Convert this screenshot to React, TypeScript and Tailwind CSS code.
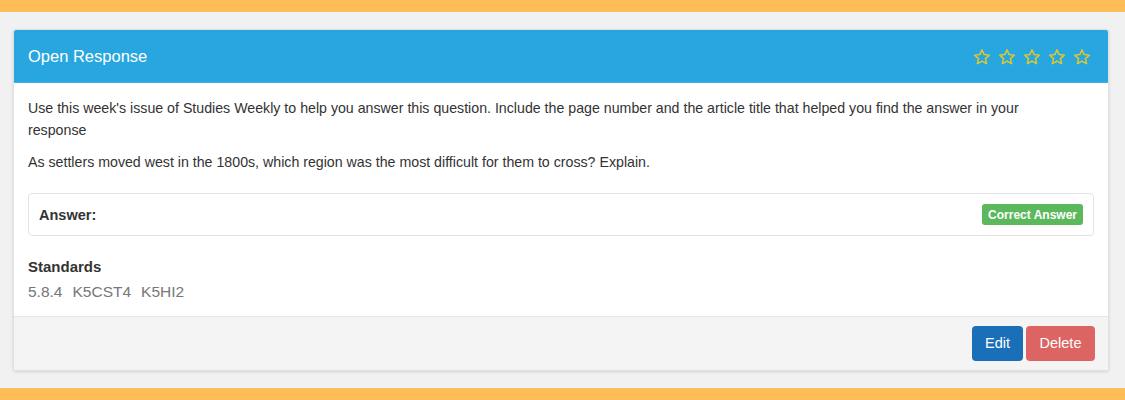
import React from "react";

function StarIcon() {
  return (
    <svg width="18" height="18" viewBox="0 0 24 24" fill="none" stroke="#e3c72e" strokeWidth="2" strokeLinejoin="round">
      <path d="M12 2.5l2.9 6.3 6.9.7-5.2 4.6 1.5 6.8L12 17.4 5.9 20.9l1.5-6.8-5.2-4.6 6.9-.7z" />
    </svg>
  );
}

export default function App() {
  return (
    <div className="w-[1125px] h-[400px] bg-[#f1f1f1] flex flex-col overflow-hidden" style={{ fontFamily: '"Liberation Sans", Arial, sans-serif' }}>
      <div className="h-[12px] bg-[#ffbd59] shrink-0" />
      <div className="flex-1 pt-[17px] pl-[13px] pr-[16px]">
        <div className="bg-white border border-[#e0e0e0] rounded-[3px] shadow-[0_1px_3px_rgba(0,0,0,0.12)] overflow-hidden">
          <div className="h-[53px] bg-[#27a6df] flex items-center justify-between pl-[14px] pr-[17px] border-b border-[#3fb3e6]">
            <span className="text-white text-[16.5px]">Open Response</span>
            <div className="flex items-center gap-[7px] pt-[2px]">
              <StarIcon />
              <StarIcon />
              <StarIcon />
              <StarIcon />
              <StarIcon />
            </div>
          </div>
          <div className="px-[14px] pt-[14px] pb-[13px] text-[#333] text-[14.2px] leading-[22px]">
            <p>
              Use this week's issue of Studies Weekly to help you answer this question. Include the page number and the article title that helped you find the answer in your
              <br />
              response
            </p>
            <p className="mt-[10px]">As settlers moved west in the 1800s, which region was the most difficult for them to cross? Explain.</p>
            <div className="mt-[20px] h-[43px] border border-[#e3e3e3] rounded-[4px] flex items-center justify-between pl-[10px] pr-[10px]">
              <span className="font-bold text-[14.5px] text-[#333]">Answer:</span>
              <span className="bg-[#5cb85c] text-white text-[12px] font-bold rounded-[3px] px-[6px] h-[21px] flex items-center">Correct Answer</span>
            </div>
            <div className="mt-[20px] font-bold text-[#333] text-[15px] leading-[22px]">Standards</div>
            <div className="mt-[3px] text-[#777] text-[15.5px] flex gap-[10px]">
              <span>5.8.4</span>
              <span>K5CST4</span>
              <span>K5HI2</span>
            </div>
          </div>
          <div className="h-[54px] bg-[#f4f4f4] border-t border-[#e6e6e6] flex items-center justify-end gap-[3px] pr-[13px]">
            <button className="h-[35px] w-[51px] rounded-[4px] bg-[#1a70b8] text-white text-[14.5px]">Edit</button>
            <button className="h-[35px] w-[69px] rounded-[4px] bg-[#dc6563] text-white text-[14.5px]">Delete</button>
          </div>
        </div>
      </div>
      <div className="h-[12px] bg-[#ffbd59] shrink-0" />
    </div>
  );
}
